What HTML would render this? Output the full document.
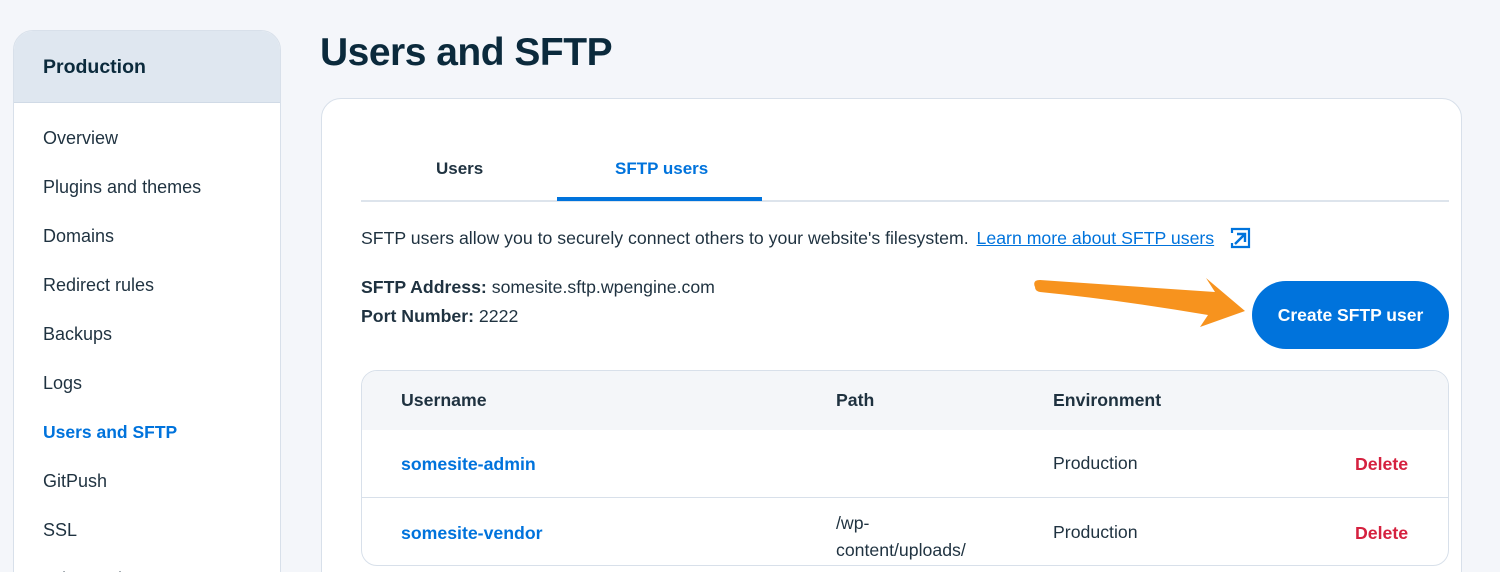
<!DOCTYPE html>
<html><head><meta charset="utf-8"><style>
*{margin:0;padding:0;box-sizing:border-box}
html,body{width:1500px;height:572px;overflow:hidden}
body{background:#f4f6fa;font-family:"Liberation Sans",sans-serif;color:#1f3240;position:relative}
.a{position:absolute;white-space:nowrap}
.side{position:absolute;left:13px;top:30px;width:268px;height:600px;background:#fff;border:1px solid #d8e0ea;border-radius:20px;overflow:hidden}
.sh{height:72px;background:#dfe7f0;border-bottom:1px solid #d0dae6}
.it{position:absolute;left:29px;font-size:18px;color:#1f3240}
.card{position:absolute;left:321px;top:98px;width:1141px;height:520px;background:#fff;border:1px solid #d8e0ea;border-radius:20px}
.tbl{position:absolute;left:361px;top:370px;width:1088px;height:196px;border:1px solid #d8e0ea;border-radius:16px;overflow:hidden;background:#fff}
b{font-weight:bold}
.t{font-size:17.7px}
</style></head><body>
<div class="side"><div class="sh"></div>
<div class="a" style="left:29px;top:25px;font-size:19.5px;font-weight:bold;color:#0b2a3c">Production</div>
<div class="it" style="top:97px">Overview</div>
<div class="it" style="top:146px">Plugins and themes</div>
<div class="it" style="top:195px">Domains</div>
<div class="it" style="top:244px">Redirect rules</div>
<div class="it" style="top:293px">Backups</div>
<div class="it" style="top:342px">Logs</div>
<div class="it" style="top:391px;color:#0073dc;font-weight:bold;font-size:17.5px">Users and SFTP</div>
<div class="it" style="top:440px">GitPush</div>
<div class="it" style="top:489px">SSL</div>
<div class="it" style="top:538px">Other tools</div>
</div>
<div class="a" style="left:320px;top:31px;font-size:39px;font-weight:bold;color:#0b2a3c;letter-spacing:-0.5px">Users and SFTP</div>
<div class="card"></div>
<div class="a" style="left:361px;top:200px;width:1088px;height:2px;background:#dde4ec"></div>
<div class="a" style="left:557px;top:197px;width:205px;height:4px;background:#0073dc"></div>
<div class="a" style="left:436px;top:159px;font-size:17px;font-weight:bold;color:#1f3240">Users</div>
<div class="a" style="left:615px;top:159px;font-size:17px;font-weight:bold;color:#0073dc">SFTP users</div>
<div class="a t" style="left:361px;top:228px">SFTP users allow you to securely connect others to your website's filesystem. <span style="color:#0073dc;text-decoration:underline;margin-left:3px">Learn more about SFTP users</span></div>
<svg class="a" style="left:1228px;top:226px" width="24" height="24" viewBox="0 0 24 24"><path d="M4 7V3h17v18H4v-4" fill="none" stroke="#0073dc" stroke-width="2.2"/><path d="M7 18L16 9M9 8h8v8" fill="none" stroke="#0073dc" stroke-width="2.4"/></svg>
<div class="a t" style="left:361px;top:277px"><b>SFTP Address:</b> somesite.sftp.wpengine.com</div>
<div class="a t" style="left:361px;top:306px"><b>Port Number:</b> 2222</div>
<svg class="a" style="left:1030px;top:275px" width="220" height="60"><path d="M5 12 Q2 5 10 5 L185 17 L176 3 L215 36 L170 52 L178 40 Q90 25 10 17 Q5 16 5 12 Z" fill="#f7931e"/></svg>
<div class="a" style="left:1252px;top:281px;width:197px;height:68px;border-radius:34px;background:#0073dc;color:#fff;font-size:17.5px;font-weight:bold;text-align:center;line-height:68px">Create SFTP user</div>
<div class="tbl">
<div style="height:59px;background:#f4f6f9"></div>
<div style="position:absolute;left:0;top:126px;width:100%;height:1px;background:#d8e0ea"></div>
</div>
<div class="a t" style="left:401px;top:390px;font-weight:bold">Username</div>
<div class="a t" style="left:836px;top:390px;font-weight:bold">Path</div>
<div class="a t" style="left:1053px;top:390px;font-weight:bold">Environment</div>
<div class="a t" style="left:401px;top:454px;font-weight:bold;color:#0073dc">somesite-admin</div>
<div class="a t" style="left:1053px;top:453px">Production</div>
<div class="a t" style="left:1355px;top:454px;font-weight:bold;color:#d5213f">Delete</div>
<div class="a t" style="left:401px;top:523px;font-weight:bold;color:#0073dc">somesite-vendor</div>
<div class="a t" style="left:836px;top:510px;line-height:27px">/wp-<br>content/uploads/</div>
<div class="a t" style="left:1053px;top:522px">Production</div>
<div class="a t" style="left:1355px;top:523px;font-weight:bold;color:#d5213f">Delete</div>
</body></html>
